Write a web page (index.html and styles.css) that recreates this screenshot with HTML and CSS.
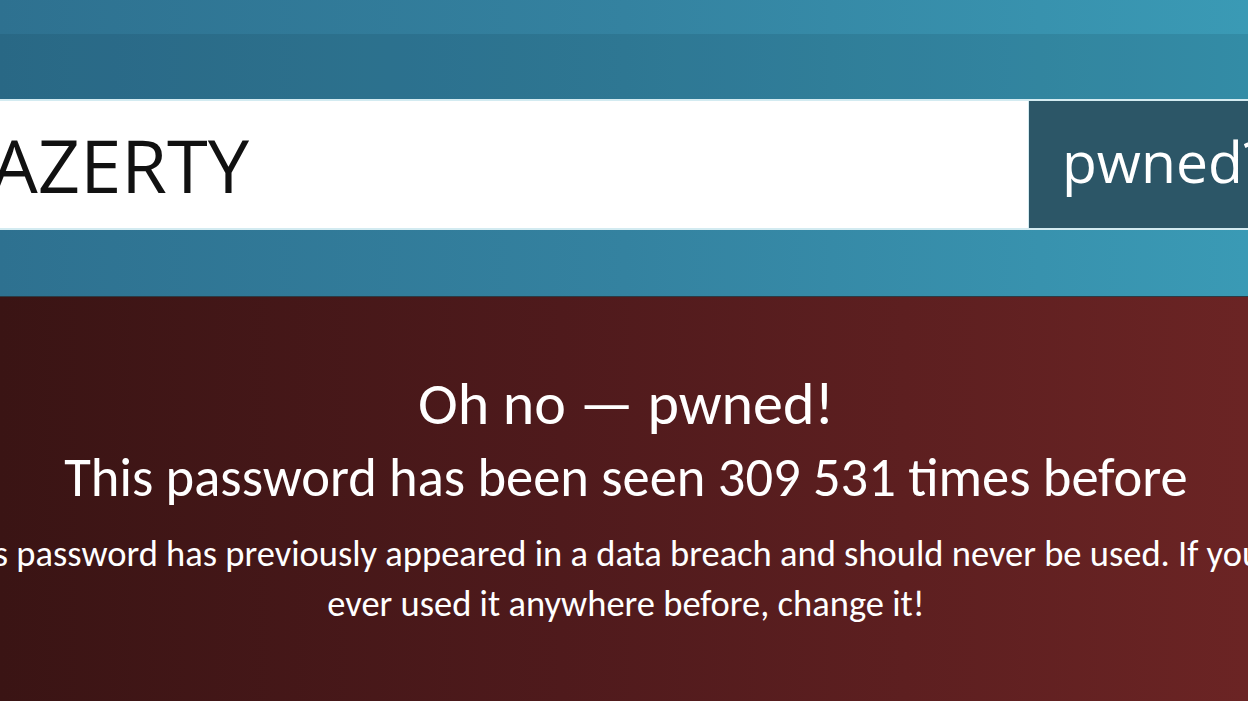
FILE: index.html
```html
<!DOCTYPE html>
<html lang="en">
<head>
<meta charset="utf-8">
<title>Pwned Passwords</title>
<link rel="stylesheet" href="styles.css">
</head>
<body>
<header class="hero">
  <div class="nav"></div>
  <div class="band"></div>
  <form class="search">
    <div class="field">AZERTY</div>
    <button class="btn" type="button">pwned?</button>
  </form>
</header>
<main class="result">
  <div class="wrap">
    <h1 class="title">Oh no — pwned!</h1>
    <h2 class="subtitle">This password has been seen 309 531 times before</h2>
    <p class="text">This password has previously appeared in a data breach and should never be used. If you've ever used it anywhere before, change it!</p>
  </div>
</main>
</body>
</html>
```
FILE: styles.css
```css
html, body {
  margin: 0;
  padding: 0;
  height: 100%;
  overflow: hidden;
}
body {
  font-family: Carlito, "Open Sans", "Liberation Sans", sans-serif;
  background: #4a1a1a;
}
.hero {
  background: linear-gradient(to right, #2e7190 0%, #3482a0 50%, #3a9ab5 100%);
}
.nav {
  height: 34px;
}
.band {
  height: 65px;
  background: rgba(10, 40, 60, 0.12);
}
.search {
  display: flex;
  margin: 0 0 0 -40px;
  padding-bottom: 66px;
}
.field {
  flex: 0 0 1068px;
  box-sizing: border-box;
  height: 131px;
  background: #fff;
  border-top: 2px solid #d3ebf1;
  border-bottom: 2px solid #d3ebf1;
  padding-left: 31px;
  display: flex;
  align-items: center;
  font-family: "Open Sans", sans-serif;
  font-size: 74px;
  color: #111;
}
.btn {
  flex: 0 0 auto;
  box-sizing: border-box;
  height: 131px;
  margin: 0;
  width: 300px;
  border: 2px solid #d3ebf1;
  border-left: 1px solid #d3ebf1;
  background: #2c5667;
  color: #fff;
  font-family: "Open Sans", sans-serif;
  font-size: 57px;
  text-align: left;
  padding: 0 0 8px 33px;
}
.result {
  height: 100%;
  background: linear-gradient(to right, #3a1414 0%, #4f1a1c 45%, #6b2424 100%);
  color: #fff;
  border-top: 1px solid #2b3b45;
}
.wrap {
  margin: 0 -300px;
  padding: 74px 0 0 4px;
  text-align: center;
}
.title {
  margin: 0;
  font-weight: normal;
  font-size: 60px;
  line-height: 66px;
}
.subtitle {
  margin: 8px 0 0;
  font-weight: normal;
  font-size: 54.5px;
  line-height: 66px;
}
.text {
  margin: 18px auto 0;
  width: 1360px;
  font-size: 36.5px;
  line-height: 50px;
}
```
